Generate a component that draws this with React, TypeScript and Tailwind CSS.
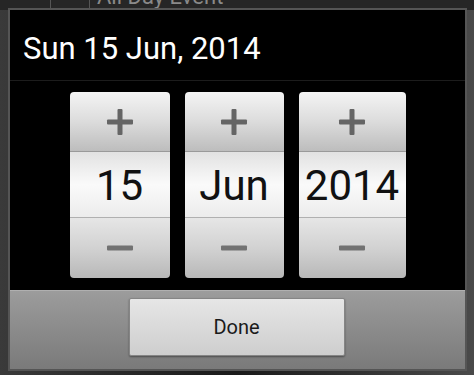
import React from 'react';

const columns = [
  { id: 'day', value: '15', width: 'w-[100px]' },
  { id: 'month', value: 'Jun', width: 'w-[99px]' },
  { id: 'year', value: '2014', width: 'w-[107px]' },
];

const PlusIcon = () => (
  <svg width="28" height="28" viewBox="0 0 28 28">
    <rect x="11.5" y="1" width="5" height="26" rx="1" fill="#656565" />
    <rect x="1" y="11.5" width="26" height="5" rx="1" fill="#656565" />
  </svg>
);

const MinusIcon = () => (
  <svg width="28" height="6" viewBox="0 0 28 6">
    <rect x="1" y="0.5" width="26" height="5" rx="1" fill="#727272" />
  </svg>
);

const Spinner: React.FC<{ value: string; width: string }> = ({ value, width }) => (
  <div className={`${width} flex flex-col rounded-[4px] overflow-hidden`}>
    {/* increment */}
    <button className="h-[60px] flex items-center justify-center bg-gradient-to-b from-[#f4f4f4] via-[#dcdcdc] to-[#bdbdbd] border-b border-[#9a9a9a]">
      <PlusIcon />
    </button>
    {/* current value */}
    <div className="h-[66px] flex items-center justify-center pt-[3px] bg-gradient-to-b from-[#e2e2e2] via-[#fafafa] to-[#ececec] border-b border-[#b0b0b0]">
      <span className="text-[42px] leading-none text-[#111]" style={{ fontFamily: 'Roboto, sans-serif' }}>
        {value}
      </span>
    </div>
    {/* decrement */}
    <button className="h-[60px] flex items-center justify-center bg-gradient-to-b from-[#e6e6e6] via-[#d2d2d2] to-[#b8b8b8]">
      <MinusIcon />
    </button>
  </div>
);

export default function App() {
  return (
    <div
      className="relative w-[474px] h-[375px] overflow-hidden bg-gradient-to-r from-[#3a3a3a] via-[#1a1a1a] to-[#4a4a4a]"
      style={{ fontFamily: 'Roboto, sans-serif' }}
    >
      {/* screen behind the dialog */}
      <div className="absolute left-0 top-0 w-full h-[10px] bg-[#262626]">
        <div className="absolute left-[50px] top-[-20px] w-[40px] h-[40px] border border-[#555] rounded-[2px]" />
        <div className="absolute left-[97px] top-[-14px] text-[22px] text-[#8a8a8a] leading-none">All Day Event</div>
      </div>

      {/* dialog */}
      <div className="absolute left-[8px] top-[8px] w-[459px] h-[363px] border-2 border-[#555] bg-black flex flex-col">
        <div className="h-[71px] flex items-center pl-[13px] pt-[6px] border-b border-[#1c1c1c]">
          <span className="text-[31px] text-white leading-none">Sun 15 Jun, 2014</span>
        </div>

        <div className="h-[209px] flex items-start justify-center gap-[15px] pt-[11px]">
          {columns.map(c => (
            <Spinner key={c.id} value={c.value} width={c.width} />
          ))}
        </div>

        <div className="flex-1 flex items-start justify-center pt-[7px] bg-gradient-to-b from-[#9c9c9c] to-[#7a7a7a] border-t border-[#b0b0b0]">
          <button className="w-[216px] h-[58px] ml-[-2px] border border-[#858585] rounded-[2px] bg-gradient-to-b from-[#e6e6e6] to-[#cecece] shadow-[0_1px_2px_rgba(0,0,0,0.4)] text-[20px] text-[#1a1a1a]">
            Done
          </button>
        </div>
      </div>
    </div>
  );
}
